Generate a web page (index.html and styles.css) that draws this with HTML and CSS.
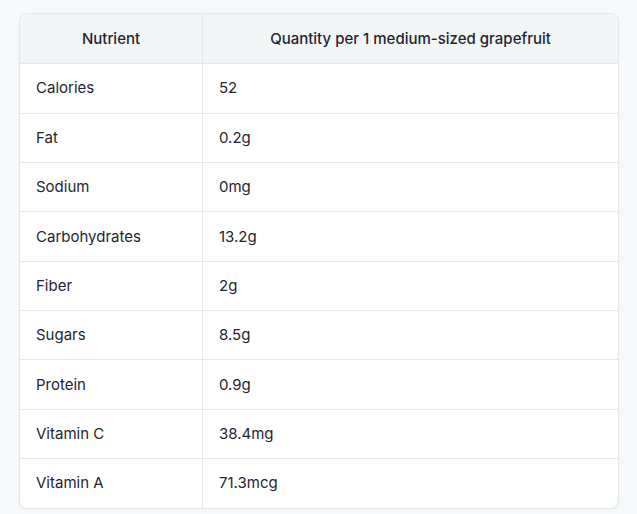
FILE: index.html
```html
<!DOCTYPE html>
<html>
<head>
<meta charset="utf-8">
<link rel="stylesheet" href="styles.css">
</head>
<body>
<div class="card">
<table class="nutri">
<thead>
<tr><th class="c1">Nutrient</th><th class="c2">Quantity per 1 medium-sized grapefruit</th></tr>
</thead>
<tbody>
<tr><td>Calories</td><td>52</td></tr>
<tr><td>Fat</td><td>0.2g</td></tr>
<tr><td>Sodium</td><td>0mg</td></tr>
<tr><td>Carbohydrates</td><td>13.2g</td></tr>
<tr><td>Fiber</td><td>2g</td></tr>
<tr><td>Sugars</td><td>8.5g</td></tr>
<tr><td>Protein</td><td>0.9g</td></tr>
<tr><td>Vitamin C</td><td>38.4mg</td></tr>
<tr><td>Vitamin A</td><td>71.3mcg</td></tr>
</tbody>
</table>
</div>
</body>
</html>
```
FILE: styles.css
```css
html, body {
  margin: 0;
  padding: 0;
  background: #f6f9fa;
}
body {
  padding: 13px 19px 0 19px;
  font-family: Inter, "Noto Sans", sans-serif;
  font-size: 15px;
  color: #1f2530;
}
.card {
  width: 598px;
  background: #fff;
  border: 1px solid #e4e8ec;
  border-radius: 8px;
  overflow: hidden;
  box-shadow: 0 1px 2px rgba(0,0,0,0.06);
}
.nutri {
  width: 100%;
  border-collapse: collapse;
}
.nutri th {
  background: #f3f6f7;
  font-weight: 500;
  text-align: center;
  padding: 14.6px 16px;
  line-height: 20px;
  border-bottom: 1px solid #e4e8ec;
}
.nutri td {
  text-align: left;
  padding: 14.2px 16px;
  line-height: 20px;
  border-bottom: 1px solid #e4e8ec;
}
.nutri tbody tr:last-child td {
  border-bottom: none;
}
.nutri th.c1, .nutri td:first-child {
  width: 150px;
  border-right: 1px solid #e4e8ec;
}
```
